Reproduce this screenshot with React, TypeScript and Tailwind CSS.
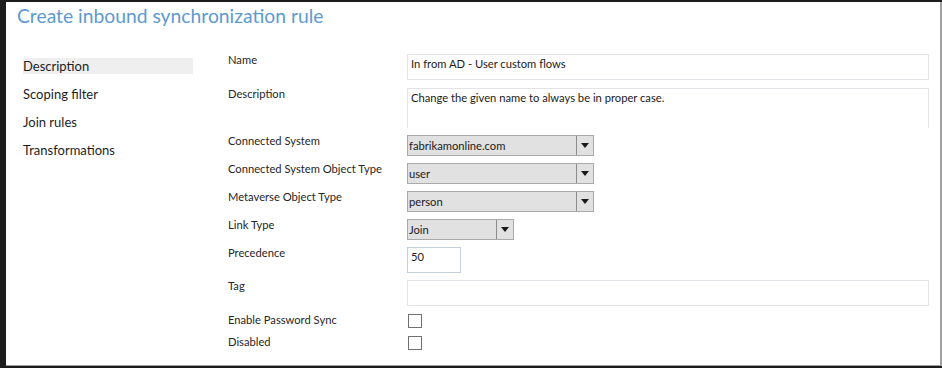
const font = { fontFamily: 'Lato, "Noto Sans", sans-serif' };

function Select({ value, width }: { value: string; width: string }) {
  return (
    <div className={`flex h-[21px] ${width} border border-[#a9a9a9] bg-[#e1e1e1]`}>
      <div className="flex flex-1 items-center pl-px text-[11.2px] leading-none text-[#1b1b1b]">{value}</div>
      <div className="flex w-[17px] items-center justify-center border-l border-[#8c8c8c]">
        <svg width="8" height="5" viewBox="0 0 8 5">
          <path d="M0 0 H8 L4 5 Z" fill="#1b1b1b" />
        </svg>
      </div>
    </div>
  );
}

function Row({ label, children, gap = "mt-[7px]" }: { label: string; children: React.ReactNode; gap?: string }) {
  return (
    <div className={`flex items-start ${gap}`}>
      <div className="w-[179px] -mt-[2px] text-[11.2px] leading-[16px] text-[#262626]">{label}</div>
      <div>{children}</div>
    </div>
  );
}

export default function App() {
  return (
    <div className="h-[368px] w-[942px] bg-[#1c1c1c] pl-[6px] pt-[2px]" style={font}>
      <div className="h-[364px] w-[936px] border-r-2 border-b border-[#a0a0a0] bg-white">
        <h1 className="pl-[11px] pt-[1px] text-[19.3px] font-normal leading-[26px] text-[#5d9ad0]">
          Create inbound synchronization rule
        </h1>
        <div className="mt-[25px] flex">
          <nav className="ml-[17px] w-[170px] pt-[4px] text-[13px] text-[#1e1e1e]">
            <div className="h-[16px] bg-[#efefef] leading-[16px]">Description</div>
            <div className="mt-[12px] leading-[16px]">Scoping filter</div>
            <div className="mt-[12px] leading-[16px]">Join rules</div>
            <div className="mt-[12px] leading-[16px]">Transformations</div>
          </nav>
          <div className="ml-[35px]">
            <Row label="Name" gap="">
              <div className="h-[26px] w-[522px] border border-[#e2e2e8] px-[3px] text-[11.2px] leading-[17px] text-[#1b1b1b]">
                In from AD - User custom flows
              </div>
            </Row>
            <Row label="Description" gap="mt-[8px]">
              <div className="h-[40px] w-[522px] border border-b-0 border-[#e2e2e8] px-[3px] text-[11.2px] leading-[17px] text-[#1b1b1b]">
                Change the given name to always be in proper case.
              </div>
            </Row>
            <Row label="Connected System">
              <Select value="fabrikamonline.com" width="w-[187px]" />
            </Row>
            <Row label="Connected System Object Type">
              <Select value="user" width="w-[187px]" />
            </Row>
            <Row label="Metaverse Object Type">
              <Select value="person" width="w-[187px]" />
            </Row>
            <Row label="Link Type">
              <Select value="Join" width="w-[107px]" />
            </Row>
            <Row label="Precedence">
              <div className="h-[26px] w-[54px] border border-[#c3d1df] px-[3px] text-[11.2px] leading-[17px] text-[#1b1b1b]">50</div>
            </Row>
            <Row label="Tag">
              <div className="h-[26px] w-[522px] border border-[#e2e2e8]" />
            </Row>
            <Row label="Enable Password Sync" gap="mt-[8px]">
              <div className="ml-px h-[14px] w-[14px] border border-[#707070] bg-white" />
            </Row>
            <Row label="Disabled" gap="mt-[8px]">
              <div className="ml-px h-[14px] w-[14px] border border-[#707070] bg-white" />
            </Row>
          </div>
        </div>
      </div>
    </div>
  );
}
